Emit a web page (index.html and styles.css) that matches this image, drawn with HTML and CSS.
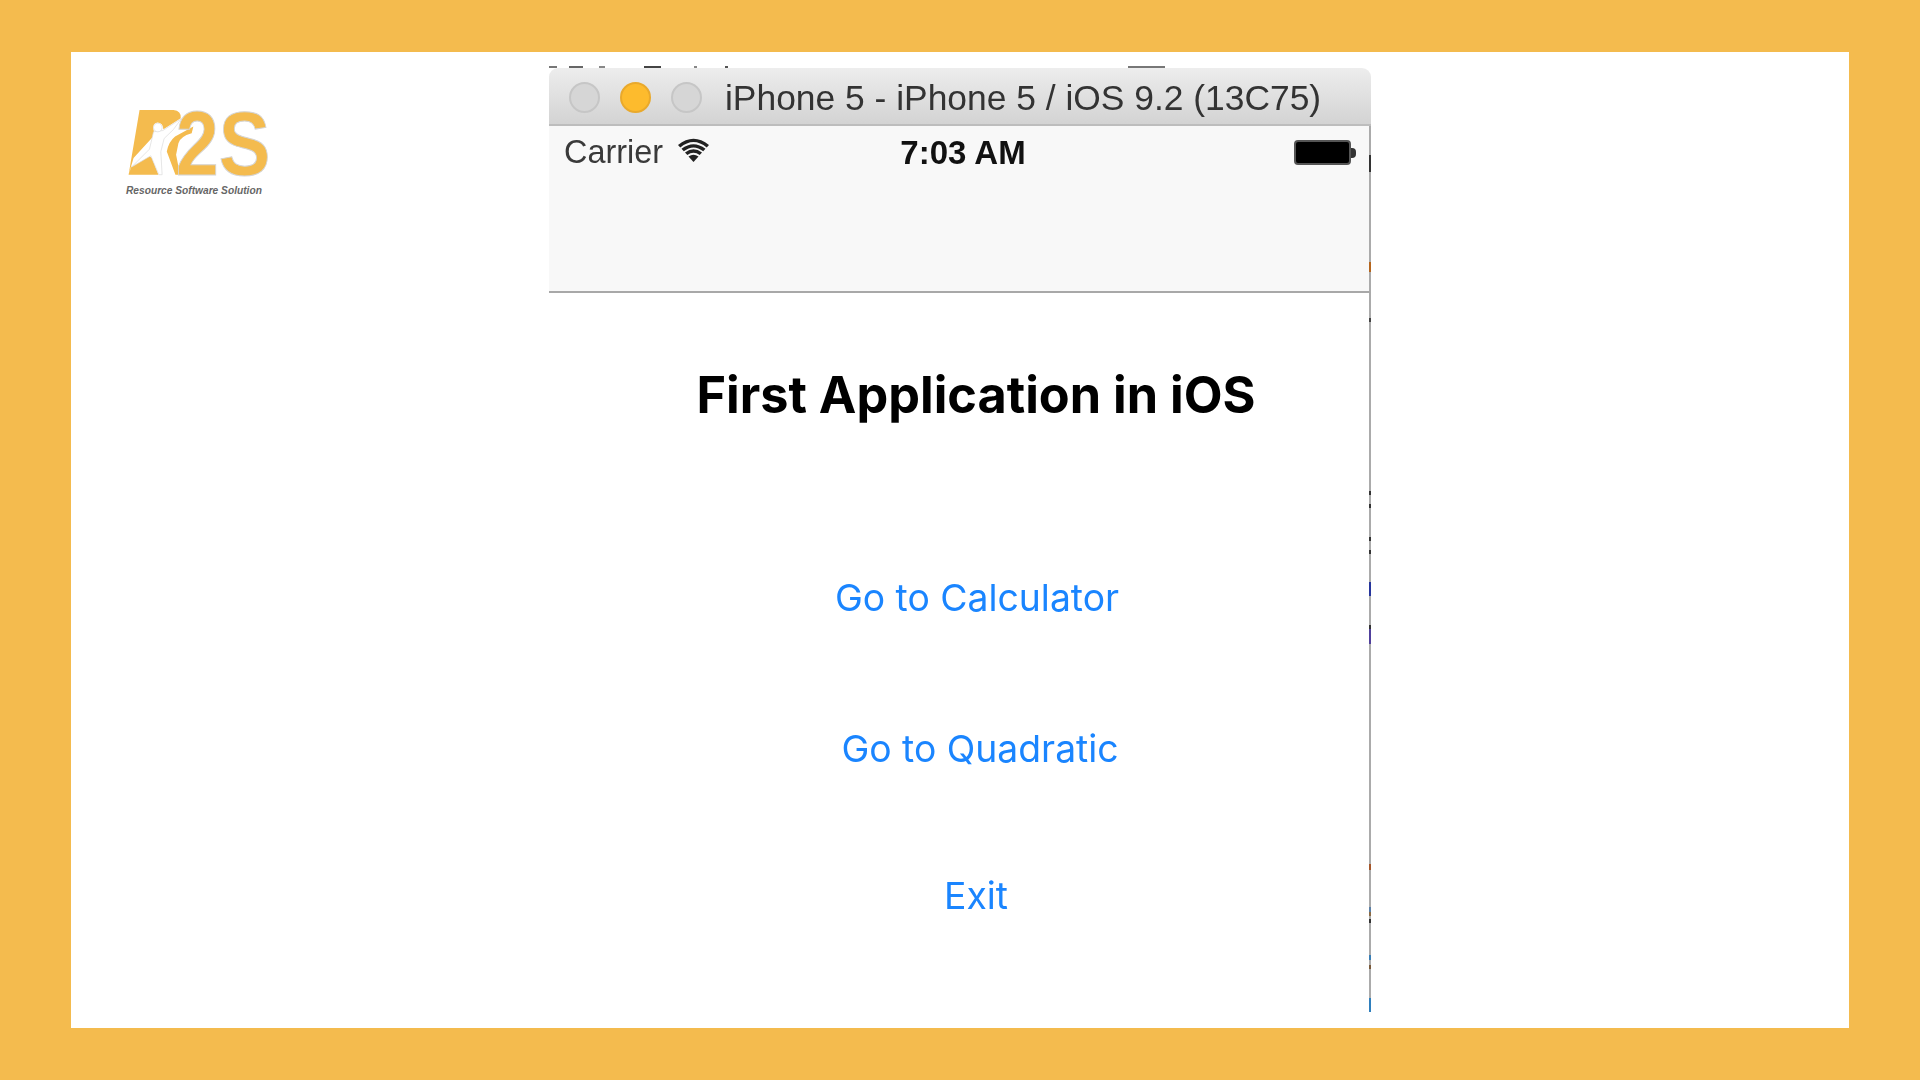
FILE: index.html
```html
<!DOCTYPE html>
<html lang="en">
<head>
<meta charset="utf-8">
<title>First Application in iOS</title>
<link rel="stylesheet" href="styles.css">
</head>
<body>
<main class="slide">
  <aside class="brand">
    <svg class="brand-mark" viewBox="0 0 540 280" aria-hidden="true">
      <path class="mark-r" d="M88 60H190Q214 62 212 85L160 118Q158 98 142 98Q126 100 130 120L134 135L70 205L55 255L63 232L112 195L125 205L145 255H55ZM170 185Q176 155 195 140L250 110L245 130Q210 140 205 160L198 195L210 255H196Z"/>
      <path class="mark-figure" d="M64 232L118 178L130 126L158 122L214 86Q192 122 162 146L152 186L156 255H146L122 198Z"/>
      <circle class="mark-head" cx="143" cy="113" r="13"/>
      <text class="mark-text" x="197" y="255" textLength="285" lengthAdjust="spacingAndGlyphs">2S</text>
    </svg>
    <p class="brand-name">Resource Software Solution</p>
  </aside>

  <section class="simulator">
    <div class="specks-top"></div>
    <header class="titlebar">
      <div class="lights">
        <span class="light"></span>
        <span class="light light-min"></span>
        <span class="light"></span>
      </div>
      <h2 class="window-title">iPhone 5 - iPhone 5 / iOS 9.2 (13C75)</h2>
    </header>

    <div class="navbar">
      <div class="statusbar">
        <div class="carrier">
          <span>Carrier</span>
          <svg class="wifi" viewBox="0 0 32 24" aria-hidden="true">
            <path d="M16 24L11 18.500Q16 15 21 18.500Z"/>
            <path d="M7.500 14.500L9.800 17Q16 12.500 22.200 17L24.500 14.500Q16 8 7.500 14.500Z"/>
            <path d="M4 10.800L6.300 13.300Q16 5.500 25.700 13.300L28 10.800Q16 1.500 4 10.800Z"/>
            <path d="M0.500 7L2.800 9.500Q16 -1.500 29.200 9.500L31.500 7Q16 -5.500 .5 7Z"/>
          </svg>
        </div>
        <span class="clock">7:03 AM</span>
        <div class="battery"><span class="battery-cell"></span><span class="battery-nub"></span></div>
      </div>
    </div>

    <div class="screen">
      <h1 class="app-title">First Application in iOS</h1>
      <a class="action action-calc">Go to Calculator</a>
      <a class="action action-quad">Go to Quadratic</a>
      <a class="action action-exit">Exit</a>
    </div>
    <div class="specks-side"></div>
  </section>
</main>
</body>
</html>
```

FILE: styles.css
```css
* { box-sizing: border-box; }

html, body { height: 100%; }

body {
  margin: 0;
  padding: 52px 71px 52px;
  background: #f4bb4e;
  font-family: "Liberation Sans", Arial, sans-serif;
}

.slide {
  display: flex;
  align-items: flex-start;
  height: 976px;
  background: #fff;
}

.brand {
  flex: none;
  width: 478px;
  padding: 38px 0 0 39px;
}

.brand-mark {
  display: block;
  width: 180px;
  height: 93px;
  overflow: visible;
  filter: blur(0.4px);
}

.mark-r { fill: #f4bb4e; }
.mark-figure { fill: #fff; stroke: #d9d9d9; stroke-width: 2; }
.mark-head { fill: #fff; stroke: #d9d9d9; stroke-width: 2; }

.mark-text {
  font-family: "Liberation Sans", Arial, sans-serif;
  font-size: 276px;
  font-weight: 700;
  fill: #f4bb4e;
  stroke: #d5d5d5;
  stroke-width: 3;
}

.brand-name {
  margin: 1px 0 0 16px;
  color: #666;
  font-size: 10.200px;
  font-style: italic;
  font-weight: 700;
  line-height: 14px;
  white-space: nowrap;
}

.simulator {
  position: relative;
  flex: none;
  width: 822px;
  height: 944px;
  margin-top: 16px;
  filter: blur(0.7px);
}

.specks-top {
  position: absolute;
  top: -2px;
  left: 0;
  width: 100%;
  height: 2px;
  background: linear-gradient(90deg,
    #777 0 8px, transparent 8px 20px,
    #666 20px 34px, transparent 34px 50px,
    #888 50px 56px, transparent 56px 95px,
    #444 95px 112px, transparent 112px 145px,
    #888 145px 148px, transparent 148px 176px,
    #555 176px 179px, transparent 179px 579px,
    #777 579px 616px, transparent 616px);
}

.specks-side {
  position: absolute;
  top: 0;
  right: 0;
  width: 2px;
  height: 100%;
  background: linear-gradient(180deg,
    transparent 87px, #333 87px 104px, transparent 104px 194px,
    #b5651d 194px 204px, transparent 204px 250px,
    #444 250px 254px, transparent 254px 423px,
    #333 423px 427px, transparent 427px 436px,
    #333 436px 440px, transparent 440px 469px,
    #333 469px 473px, transparent 473px 482px,
    #333 482px 486px, transparent 486px 514px,
    #26359c 514px 528px, transparent 528px 557px,
    #333 557px 561px, #50409c 561px 576px, transparent 576px 796px,
    #a5562a 796px 802px, transparent 802px 839px,
    #5b7fa5 839px 844px, #8a6a45 844px 848px, transparent 848px 851px,
    #333 851px 855px, transparent 855px 887px,
    #3a7eb5 887px 892px, transparent 892px 897px,
    #7a5a3a 897px 901px, transparent 901px 930px,
    #2f7fbd 930px);
}

.titlebar {
  display: flex;
  align-items: center;
  height: 58px;
  padding-top: 3px;
  border-radius: 9px 9px 0 0;
  border-bottom: 2px solid #bdbdbd;
  background: linear-gradient(180deg, #ededed, #d3d3d3);
}

.lights {
  display: flex;
  gap: 20px;
  margin-left: 20px;
}

.light {
  width: 31px;
  height: 31px;
  border: 2px solid #c6c6c6;
  border-radius: 50%;
  background: #d6d6d6;
}

.light-min {
  border-color: #e9a92c;
  background: #fdbb2d;
}

.window-title {
  margin: 0 0 0 23px;
  padding-top: 2px;
  color: #333;
  font-size: 35.400px;
  font-weight: 400;
  white-space: nowrap;
}

.navbar {
  height: 167px;
  border-right: 2px solid #ababab;
  border-bottom: 2px solid #a8a8a8;
  background: #f8f8f8;
}

.statusbar {
  display: grid;
  grid-template-columns: 1fr auto 1fr;
  align-items: center;
  height: 53px;
  padding: 0 13px 0 15px;
  color: #222;
  font-size: 32.400px;
}

.carrier {
  display: flex;
  align-items: center;
  gap: 14px;
  color: #3a3a3a;
}

.wifi {
  width: 33px;
  height: 24px;
  margin-top: -6px;
  fill: #222;
}

.clock {
  margin-left: 6px;
  color: #111;
  font-size: 33px;
  font-weight: 700;
}

.battery {
  display: flex;
  align-items: center;
  justify-self: end;
}

.battery-cell {
  width: 57px;
  height: 25px;
  border: 2px solid #555;
  border-radius: 4px;
  background: #000;
}

.battery-nub {
  width: 5px;
  height: 10px;
  border-radius: 0 4px 4px 0;
  background: #333;
}

.screen {
  display: flex;
  flex-direction: column;
  align-items: center;
  height: 719px;
  border-right: 2px solid #ababab;
  background: #fff;
}

.app-title {
  margin: 72px 0 0 34px;
  color: #000;
  font-family: Inter, "Liberation Sans", sans-serif;
  font-size: 50.400px;
  font-weight: 700;
  line-height: 60px;
  white-space: nowrap;
}

.action {
  color: #1a85ff;
  font-family: Inter, "Liberation Sans", sans-serif;
  font-size: 37.300px;
  font-weight: 400;
  line-height: 44px;
  white-space: nowrap;
}

.action-calc { margin: 151px 0 0 36px; }
.action-quad { margin: 107px 0 0 42px; }
.action-exit { margin: 103px 0 0 34px; }
```
